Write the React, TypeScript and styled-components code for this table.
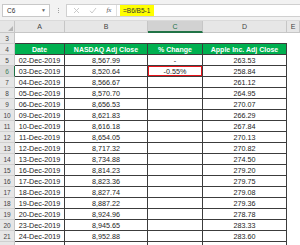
import React from "react";
import styled, { createGlobalStyle, css } from "styled-components";

const GlobalStyle = createGlobalStyle`
  html, body { margin: 0; padding: 0; background: #ffffff; }
  body { font-family: "Liberation Sans", Arial, sans-serif; }
  * { box-sizing: border-box; }
`;

const WIDTHS = [15, 50, 83, 55, 84, 13];

const Page = styled.div`
  width: 300px;
  height: 245px;
  overflow: hidden;
  display: flex;
  flex-direction: column;
  background: #ffffff;
`;

const FormulaBar = styled.div`
  height: 21px;
  flex: none;
  display: flex;
  align-items: center;
  padding: 0 0 0 2px;
  background: #f2f2f2;
  border-bottom: 1px solid #dadada;
`;

const NameBox = styled.div`
  width: 48px;
  height: 13px;
  background: #ffffff;
  border: 1px solid #c8c8c8;
  display: flex;
  align-items: center;
  justify-content: space-between;
  padding: 0 3px 0 4px;
  font-size: 6.5px;
  color: #333;
`;

const Caret = styled.span`
  font-size: 5px;
  color: #666;
`;

const Dots = styled.div`
  width: 16px;
  display: flex;
  flex-direction: column;
  align-items: center;
  gap: 1px;
  & > i {
    width: 1px;
    height: 1px;
    background: #a0a0a0;
  }
`;

const FxBox = styled.div`
  flex: 1;
  height: 13px;
  display: flex;
  align-items: center;
  background: #ffffff;
  border: 1px solid #d0d0d0;
  border-right: none;
`;

const IconGroup = styled.div`
  width: 50px;
  display: flex;
  align-items: center;
  justify-content: space-around;
  padding-left: 2px;
  height: 100%;
  border-right: 1px solid #e0e0e0;
`;

const FxText = styled.span`
  font-family: "Liberation Serif", serif;
  font-style: italic;
  font-size: 7px;
  color: #555;
`;

const Formula = styled.span`
  margin-left: 3px;
  background: #ffff00;
  height: 11px;
  display: flex;
  align-items: center;
  padding: 0 4px 0 3px;
  font-size: 6.5px;
  color: #333;
`;

const Sheet = styled.div`
  display: flex;
  flex-direction: column;
`;

const Row = styled.div<{ $h: number }>`
  display: flex;
  height: ${(p) => p.$h}px;
  flex: none;
`;

const Corner = styled.div`
  width: ${WIDTHS[0]}px;
  height: 100%;
  background: #e6e6e6;
  border-right: 1px solid #c6c6c6;
  border-bottom: 1px solid #c6c6c6;
  position: relative;
  &::after {
    content: "";
    position: absolute;
    right: 1px;
    bottom: 1px;
    width: 0;
    height: 0;
    border-left: 5px solid transparent;
    border-bottom: 5px solid #b4b4b4;
  }
`;

const ColHead = styled.div<{ $w: number; $sel?: boolean }>`
  width: ${(p) => p.$w}px;
  height: 100%;
  display: flex;
  align-items: center;
  justify-content: center;
  font-size: 7px;
  color: #444;
  background: ${(p) => (p.$sel ? "#d2d2d2" : "#e6e6e6")};
  border-right: 1px solid #c6c6c6;
  border-bottom: ${(p) => (p.$sel ? "2px solid #217346" : "1px solid #c6c6c6")};
  ${(p) => p.$sel && css`color: #217346;`}
`;

const RowHead = styled.div<{ $sel?: boolean }>`
  width: ${WIDTHS[0]}px;
  height: 100%;
  display: flex;
  align-items: center;
  justify-content: center;
  font-size: 6.5px;
  color: ${(p) => (p.$sel ? "#3f7f5a" : "#444")};
  background: ${(p) => (p.$sel ? "#d8d8d8" : "#e6e6e6")};
  border-bottom: 1px solid #cfcfcf;
  border-right: ${(p) => (p.$sel ? "1px solid #217346" : "1px solid #c6c6c6")};
`;

const Cell = styled.div<{ $w: number; $kind: "blank" | "top" | "head" | "data" | "out" }>`
  width: ${(p) => p.$w}px;
  height: 100%;
  display: flex;
  align-items: center;
  justify-content: center;
  font-size: 7.2px;
  color: #222;
  white-space: nowrap;
  overflow: hidden;
  position: relative;
  ${(p) =>
    p.$kind === "top" &&
    css`
      border-bottom: 1px solid #3c3c3c;
    `}
  ${(p) =>
    p.$kind === "head" &&
    css`
      background: #00b050;
      color: #ffffff;
      font-weight: bold;
      font-size: 7px;
      border-right: 1px solid #3c3c3c;
      border-bottom: 1px solid #3c3c3c;
    `}
  ${(p) =>
    p.$kind === "data" &&
    css`
      border-right: 1px solid #3c3c3c;
      border-bottom: 1px solid #3c3c3c;
    `}
`;

const Marked = styled.span`
  position: absolute;
  left: -1px;
  top: -1px;
  right: -1px;
  bottom: -1px;
  border: 2px solid #e8141b;
  pointer-events: none;
`;

const rows: [string, string, string, string][] = [
  ["02-Dec-2019", "8,567.99", "-", "263.53"],
  ["03-Dec-2019", "8,520.64", "-0.55%", "258.84"],
  ["04-Dec-2019", "8,566.67", "", "261.12"],
  ["05-Dec-2019", "8,570.70", "", "264.95"],
  ["06-Dec-2019", "8,656.53", "", "270.07"],
  ["09-Dec-2019", "8,621.83", "", "266.29"],
  ["10-Dec-2019", "8,616.18", "", "267.84"],
  ["11-Dec-2019", "8,654.05", "", "270.13"],
  ["12-Dec-2019", "8,717.32", "", "270.82"],
  ["13-Dec-2019", "8,734.88", "", "274.50"],
  ["16-Dec-2019", "8,814.23", "", "279.20"],
  ["17-Dec-2019", "8,823.36", "", "279.75"],
  ["18-Dec-2019", "8,827.74", "", "279.08"],
  ["19-Dec-2019", "8,887.22", "", "279.36"],
  ["20-Dec-2019", "8,924.96", "", "278.78"],
  ["23-Dec-2019", "8,945.65", "", "283.33"],
  ["24-Dec-2019", "8,952.88", "", "283.60"],
  ["26-Dec-2019", "9,022.39", "", "289.91"],
];

const RH = 11;

export default function App() {
  return (
    <Page>
      <GlobalStyle />
      <FormulaBar>
        <NameBox>
          <span>C6</span>
          <Caret>▼</Caret>
        </NameBox>
        <Dots>
          <i />
          <i />
          <i />
        </Dots>
        <FxBox>
          <IconGroup>
            <svg width="7" height="7" viewBox="0 0 7 7">
              <path d="M1 1 L6 6 M6 1 L1 6" stroke="#c4c4c4" strokeWidth="0.9" fill="none" />
            </svg>
            <svg width="8" height="7" viewBox="0 0 8 7">
              <path d="M1 3.8 L3 6 L7 1" stroke="#c4c4c4" strokeWidth="0.9" fill="none" />
            </svg>
            <FxText>fx</FxText>
          </IconGroup>
          <Formula>=B6/B5-1</Formula>
        </FxBox>
      </FormulaBar>
      <Sheet>
        <Row $h={12}>
          <Corner />
          <ColHead $w={WIDTHS[1]}>A</ColHead>
          <ColHead $w={WIDTHS[2]}>B</ColHead>
          <ColHead $w={WIDTHS[3]} $sel>C</ColHead>
          <ColHead $w={WIDTHS[4]}>D</ColHead>
          <ColHead $w={WIDTHS[5]}>E</ColHead>
        </Row>
        <Row $h={RH}>
          <RowHead>3</RowHead>
          <Cell $w={WIDTHS[1]} $kind="top" />
          <Cell $w={WIDTHS[2]} $kind="top" />
          <Cell $w={WIDTHS[3]} $kind="top" />
          <Cell $w={WIDTHS[4]} $kind="top" />
          <Cell $w={WIDTHS[5]} $kind="blank" />
        </Row>
        <Row $h={RH}>
          <RowHead>4</RowHead>
          <Cell $w={WIDTHS[1]} $kind="head">Date</Cell>
          <Cell $w={WIDTHS[2]} $kind="head">NASDAQ Adj Close</Cell>
          <Cell $w={WIDTHS[3]} $kind="head">% Change</Cell>
          <Cell $w={WIDTHS[4]} $kind="head">Apple Inc. Adj Close</Cell>
          <Cell $w={WIDTHS[5]} $kind="blank" />
        </Row>
        {rows.map((r, i) => {
          const n = i + 5;
          return (
            <Row $h={RH} key={n}>
              <RowHead $sel={n === 6}>{n}</RowHead>
              <Cell $w={WIDTHS[1]} $kind="data">{r[0]}</Cell>
              <Cell $w={WIDTHS[2]} $kind="data">{r[1]}</Cell>
              <Cell $w={WIDTHS[3]} $kind="data">
                {r[2]}
                {n === 6 && <Marked />}
              </Cell>
              <Cell $w={WIDTHS[4]} $kind="data">{r[3]}</Cell>
              <Cell $w={WIDTHS[5]} $kind="blank" />
            </Row>
          );
        })}
      </Sheet>
    </Page>
  );
}
